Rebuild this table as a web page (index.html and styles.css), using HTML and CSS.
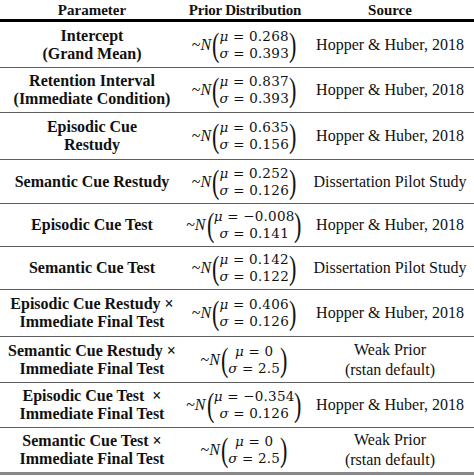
FILE: index.html
```html
<!DOCTYPE html>
<html>
<head>
<meta charset="utf-8">
<link rel="stylesheet" href="styles.css">
</head>
<body>
<table class="tbl">
  <colgroup>
    <col class="c1"><col class="c2"><col class="c3">
  </colgroup>
  <thead>
    <tr class="head">
      <th>Parameter</th>
      <th class="pd">Prior Distribution</th>
      <th>Source</th>
    </tr>
  </thead>
  <tbody>
    <tr class="r46">
      <td class="param">Intercept<br>(Grand Mean)</td>
      <td class="dist"><span class="f"><span class="tl">~<i>N</i></span><span class="pl">(</span><span class="st"><span><i>μ</i> = 0.268</span><span><i>σ</i> = 0.393</span></span><span class="pr">)</span></span></td>
      <td class="src">Hopper &amp; Huber, 2018</td>
    </tr>
    <tr class="r45">
      <td class="param">Retention Interval<br>(Immediate Condition)</td>
      <td class="dist"><span class="f"><span class="tl">~<i>N</i></span><span class="pl">(</span><span class="st"><span><i>μ</i> = 0.837</span><span><i>σ</i> = 0.393</span></span><span class="pr">)</span></span></td>
      <td class="src">Hopper &amp; Huber, 2018</td>
    </tr>
    <tr class="r47">
      <td class="param">Episodic Cue<br>Restudy</td>
      <td class="dist"><span class="f"><span class="tl">~<i>N</i></span><span class="pl">(</span><span class="st"><span><i>μ</i> = 0.635</span><span><i>σ</i> = 0.156</span></span><span class="pr">)</span></span></td>
      <td class="src">Hopper &amp; Huber, 2018</td>
    </tr>
    <tr class="r44">
      <td class="param">Semantic Cue Restudy</td>
      <td class="dist"><span class="f"><span class="tl">~<i>N</i></span><span class="pl">(</span><span class="st"><span><i>μ</i> = 0.252</span><span><i>σ</i> = 0.126</span></span><span class="pr">)</span></span></td>
      <td class="src">Dissertation Pilot Study</td>
    </tr>
    <tr class="r43">
      <td class="param">Episodic Cue Test</td>
      <td class="dist"><span class="f"><span class="tl">~<i>N</i></span><span class="pl">(</span><span class="st"><span><i>μ</i> = −0.008</span><span><i>σ</i> = 0.141</span></span><span class="pr">)</span></span></td>
      <td class="src">Hopper &amp; Huber, 2018</td>
    </tr>
    <tr class="r43">
      <td class="param">Semantic Cue Test</td>
      <td class="dist"><span class="f"><span class="tl">~<i>N</i></span><span class="pl">(</span><span class="st"><span><i>μ</i> = 0.142</span><span><i>σ</i> = 0.122</span></span><span class="pr">)</span></span></td>
      <td class="src">Dissertation Pilot Study</td>
    </tr>
    <tr class="r47">
      <td class="param">Episodic Cue Restudy ×<br>Immediate Final Test</td>
      <td class="dist"><span class="f"><span class="tl">~<i>N</i></span><span class="pl">(</span><span class="st"><span><i>μ</i> = 0.406</span><span><i>σ</i> = 0.126</span></span><span class="pr">)</span></span></td>
      <td class="src">Hopper &amp; Huber, 2018</td>
    </tr>
    <tr class="r46">
      <td class="param">Semantic Cue Restudy ×<br>Immediate Final Test</td>
      <td class="dist"><span class="f"><span class="tl">~<i>N</i></span><span class="pl">(</span><span class="st"><span><i>μ</i> = 0</span><span><i>σ</i> = 2.5</span></span><span class="pr">)</span></span></td>
      <td class="src">Weak Prior<br>(rstan default)</td>
    </tr>
    <tr class="r45">
      <td class="param">Episodic Cue Test&nbsp; ×<br>Immediate Final Test</td>
      <td class="dist"><span class="f"><span class="tl">~<i>N</i></span><span class="pl">(</span><span class="st"><span><i>μ</i> = −0.354</span><span><i>σ</i> = 0.126</span></span><span class="pr">)</span></span></td>
      <td class="src">Hopper &amp; Huber, 2018</td>
    </tr>
    <tr class="r45 last">
      <td class="param">Semantic Cue Test ×<br>Immediate Final Test</td>
      <td class="dist"><span class="f"><span class="tl">~<i>N</i></span><span class="pl">(</span><span class="st"><span><i>μ</i> = 0</span><span><i>σ</i> = 2.5</span></span><span class="pr">)</span></span></td>
      <td class="src">Weak Prior<br>(rstan default)</td>
    </tr>
  </tbody>
</table>
</body>
</html>
```
FILE: styles.css
```css
html, body {
  margin: 0;
  padding: 0;
  background: #fff;
}
body {
  font-family: "Liberation Serif", serif;
  color: #111;
}
.tbl {
  width: 474px;
  border-collapse: collapse;
  table-layout: fixed;
}
.c1 { width: 184px; }
.c2 { width: 122px; }
.c3 { width: 168px; }
.head th {
  height: 17px;
  padding: 2px 0 0 0;
  font-family: "Liberation Serif", serif;
  font-size: 15px;
  font-weight: bold;
  line-height: 16px;
  vertical-align: top;
  text-align: center;
  white-space: nowrap;
  border-bottom: 3px solid #000;
}
.head .pd {
  letter-spacing: -0.2px;
}
td {
  padding: 0;
  text-align: center;
  vertical-align: middle;
  border-bottom: 1.5px solid #5e5e5e;
}
.r43 td { height: 42px; }
.r44 td { height: 43px; }
.r45 td { height: 44px; }
.r46 td { height: 45px; }
.r47 td { height: 46px; }
.last td { border-bottom: 3px solid #888; }
.param {
  font-family: "Liberation Serif", serif;
  font-size: 16px;
  font-weight: bold;
  line-height: 18px;
  white-space: nowrap;
}
.src {
  font-family: "Liberation Serif", serif;
  font-size: 16px;
  line-height: 20px;
  white-space: nowrap;
}
.dist {
  font-size: 15px;
}
.f {
  display: inline-flex;
  align-items: center;
  font-family: "DejaVu Serif", "Liberation Serif", serif;
}
.tl {
  font-family: "Liberation Serif", serif;
  font-size: 16px;
}
.tl i { font-style: italic; }
.pl, .pr {
  font-family: "Liberation Serif", serif;
  font-size: 34px;
  line-height: 34px;
  transform: scaleX(0.65);
  display: inline-block;
}
.pl { margin: 0 -2px 0 -1px; }
.pr { margin: 0 0 0 -2px; }
.st {
  display: flex;
  flex-direction: column;
  align-items: center;
  font-size: 13.5px;
  line-height: 17px;
  white-space: pre;
  letter-spacing: 0.2px;
}
.st i { font-style: italic; }
```
